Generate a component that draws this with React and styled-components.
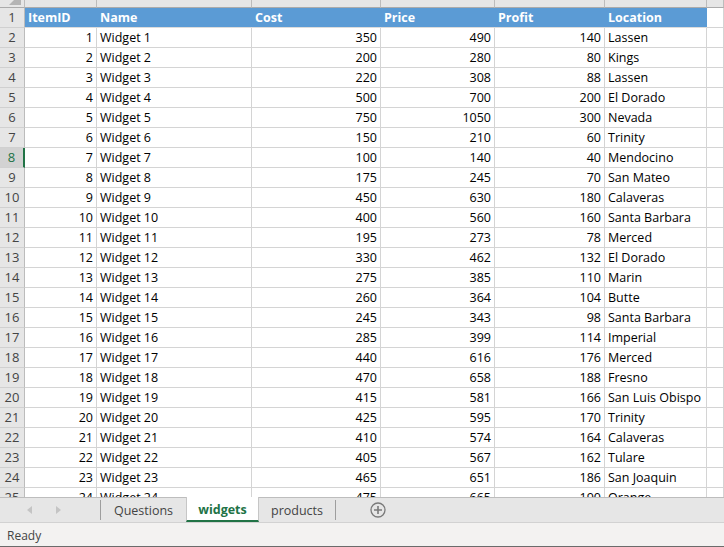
import React from 'react';
import styled, { createGlobalStyle } from 'styled-components';

const GlobalStyle = createGlobalStyle`
  html, body { margin: 0; padding: 0; }
  body { background: #fff; font-family: "Open Sans", "Liberation Sans", sans-serif; }
  * { box-sizing: border-box; }
`;

const rows = [
  [1, 'Widget 1', 350, 490, 140, 'Lassen'],
  [2, 'Widget 2', 200, 280, 80, 'Kings'],
  [3, 'Widget 3', 220, 308, 88, 'Lassen'],
  [4, 'Widget 4', 500, 700, 200, 'El Dorado'],
  [5, 'Widget 5', 750, 1050, 300, 'Nevada'],
  [6, 'Widget 6', 150, 210, 60, 'Trinity'],
  [7, 'Widget 7', 100, 140, 40, 'Mendocino'],
  [8, 'Widget 8', 175, 245, 70, 'San Mateo'],
  [9, 'Widget 9', 450, 630, 180, 'Calaveras'],
  [10, 'Widget 10', 400, 560, 160, 'Santa Barbara'],
  [11, 'Widget 11', 195, 273, 78, 'Merced'],
  [12, 'Widget 12', 330, 462, 132, 'El Dorado'],
  [13, 'Widget 13', 275, 385, 110, 'Marin'],
  [14, 'Widget 14', 260, 364, 104, 'Butte'],
  [15, 'Widget 15', 245, 343, 98, 'Santa Barbara'],
  [16, 'Widget 16', 285, 399, 114, 'Imperial'],
  [17, 'Widget 17', 440, 616, 176, 'Merced'],
  [18, 'Widget 18', 470, 658, 188, 'Fresno'],
  [19, 'Widget 19', 415, 581, 166, 'San Luis Obispo'],
  [20, 'Widget 20', 425, 595, 170, 'Trinity'],
  [21, 'Widget 21', 410, 574, 164, 'Calaveras'],
  [22, 'Widget 22', 405, 567, 162, 'Tulare'],
  [23, 'Widget 23', 465, 651, 186, 'San Joaquin'],
  [24, 'Widget 24', 475, 665, 190, 'Orange'],
];

const headers = ['ItemID', 'Name', 'Cost', 'Price', 'Profit', 'Location'];
const letters = ['A', 'B', 'C', 'D', 'E', 'F', 'G'];
const numeric = [true, false, true, true, true, false];

const Page = styled.div`
  width: 724px;
  height: 547px;
  display: flex;
  flex-direction: column;
  overflow: hidden;
`;

const Sheet = styled.div`
  flex: 1;
  min-height: 0;
  overflow: hidden;
`;

const Grid = styled.div`
  display: grid;
  grid-template-columns: 25px 72px 155px 129px 114px 110px 102px 1fr;
  grid-auto-rows: 20px;
  margin-top: -12px; /* scrolled: only the bottom of the column letters shows */
`;

const Corner = styled.div`
  background: #e6e6e6;
  border-right: 1px solid #bcbcbc;
  border-bottom: 1px solid #ababab;
  display: flex;
  align-items: flex-end;
  justify-content: flex-end;
  padding: 0 3px 2px 0;
`;

const ColHead = styled.div`
  background: #e6e6e6;
  color: #444;
  font-size: 13px;
  line-height: 14px;
  text-align: center;
  border-right: 1px solid #bcbcbc;
  border-bottom: 1px solid #ababab;
`;

const RowHead = styled.div`
  background: ${p => (p.$selected ? '#d2d2d2' : '#e6e6e6')};
  color: ${p => (p.$selected ? '#217346' : '#444')};
  font-size: 13px;
  line-height: 19px;
  text-align: center;
  border-right: ${p => (p.$selected ? '2px solid #217346' : '1px solid #bcbcbc')};
  border-bottom: 1px solid #d0d0d0;
`;

const Cell = styled.div`
  color: #000;
  font-size: 12.5px;
  line-height: 20px;
  padding: 0 3px;
  white-space: nowrap;
  overflow: hidden;
  text-align: ${p => (p.$num ? 'right' : 'left')};
  border-right: 1px solid #d4d4d4;
  border-bottom: 1px solid #d4d4d4;
`;

const HeadCell = styled.div`
  background: #5b9bd5;
  color: #fff;
  font-weight: 700;
  font-size: 12.5px;
  line-height: 20px;
  padding: 0 3px;
  white-space: nowrap;
  border-bottom: 1px solid #dcdcdc;
`;

const TabBar = styled.div`
  height: 26px;
  flex-shrink: 0;
  display: flex;
  background: #e6e6e6;
  border-top: 1px solid #bdbdbd;
  border-bottom: 1px solid #d2d2d2;
`;

const Nav = styled.div`
  width: 100px;
  display: flex;
  align-items: center;
  gap: 24px;
  padding-left: 27px;
`;

const Sep = styled.div`
  width: 1px;
  height: 20px;
  align-self: center;
  background: #9e9e9e;
`;

const Tab = styled.div`
  width: ${p => p.$w}px;
  display: flex;
  align-items: center;
  justify-content: center;
  font-size: 12.5px;
  color: #444;
  padding-top: 1px;
`;

const ActiveTab = styled(Tab)`
  background: #fff;
  color: #217346;
  font-weight: 700;
  margin-top: -1px;
  height: 25px;
  padding-top: 2px;
  border-left: 1px solid #c6c6c6;
  border-right: 1px solid #c6c6c6;
  border-bottom: 2px solid #217346;
`;

const AddButton = styled.div`
  width: 84px;
  display: flex;
  align-items: center;
  justify-content: center;
`;

const StatusBar = styled.div`
  height: 24px;
  flex-shrink: 0;
  background: #f3f2f1;
  border-bottom: 1px solid #6b6b6b;
  display: flex;
  align-items: center;
  padding: 2px 0 0 7px;
  font-size: 12px;
  color: #444;
`;

const Arrow = ({ dir }) => (
  <svg width="5" height="8" viewBox="0 0 5 8">
    <path d={dir === 'left' ? 'M5 0 L0 4 L5 8 Z' : 'M0 0 L5 4 L0 8 Z'} fill="#c4c4c4" />
  </svg>
);

export default function App() {
  return (
    <Page>
      <GlobalStyle />
      <Sheet>
        <Grid>
          <Corner>
            <svg width="12" height="12" viewBox="0 0 12 12">
              <path d="M12 0 L12 12 L0 12 Z" fill="#b4b4b4" />
            </svg>
          </Corner>
          {letters.map(l => (
            <ColHead key={l}>{l}</ColHead>
          ))}

          <RowHead>1</RowHead>
          {headers.map(h => (
            <HeadCell key={h}>{h}</HeadCell>
          ))}
          <Cell />

          {rows.map((r, i) => (
            <React.Fragment key={r[0]}>
              <RowHead $selected={i + 2 === 8}>{i + 2}</RowHead>
              {r.map((v, j) => (
                <Cell key={j} $num={numeric[j]}>{v}</Cell>
              ))}
              <Cell />
            </React.Fragment>
          ))}
        </Grid>
      </Sheet>

      <TabBar>
        <Nav>
          <Arrow dir="left" />
          <Arrow dir="right" />
        </Nav>
        <Sep />
        <Tab $w={85}>Questions</Tab>
        <ActiveTab $w={73}>widgets</ActiveTab>
        <Tab $w={76}>products</Tab>
        <Sep />
        <AddButton>
          <svg width="16" height="16" viewBox="0 0 16 16">
            <circle cx="8" cy="8" r="7" fill="none" stroke="#7a7a7a" strokeWidth="1.3" />
            <path d="M8 4 V12 M4 8 H12" stroke="#7a7a7a" strokeWidth="1.6" />
          </svg>
        </AddButton>
      </TabBar>

      <StatusBar>Ready</StatusBar>
    </Page>
  );
}
